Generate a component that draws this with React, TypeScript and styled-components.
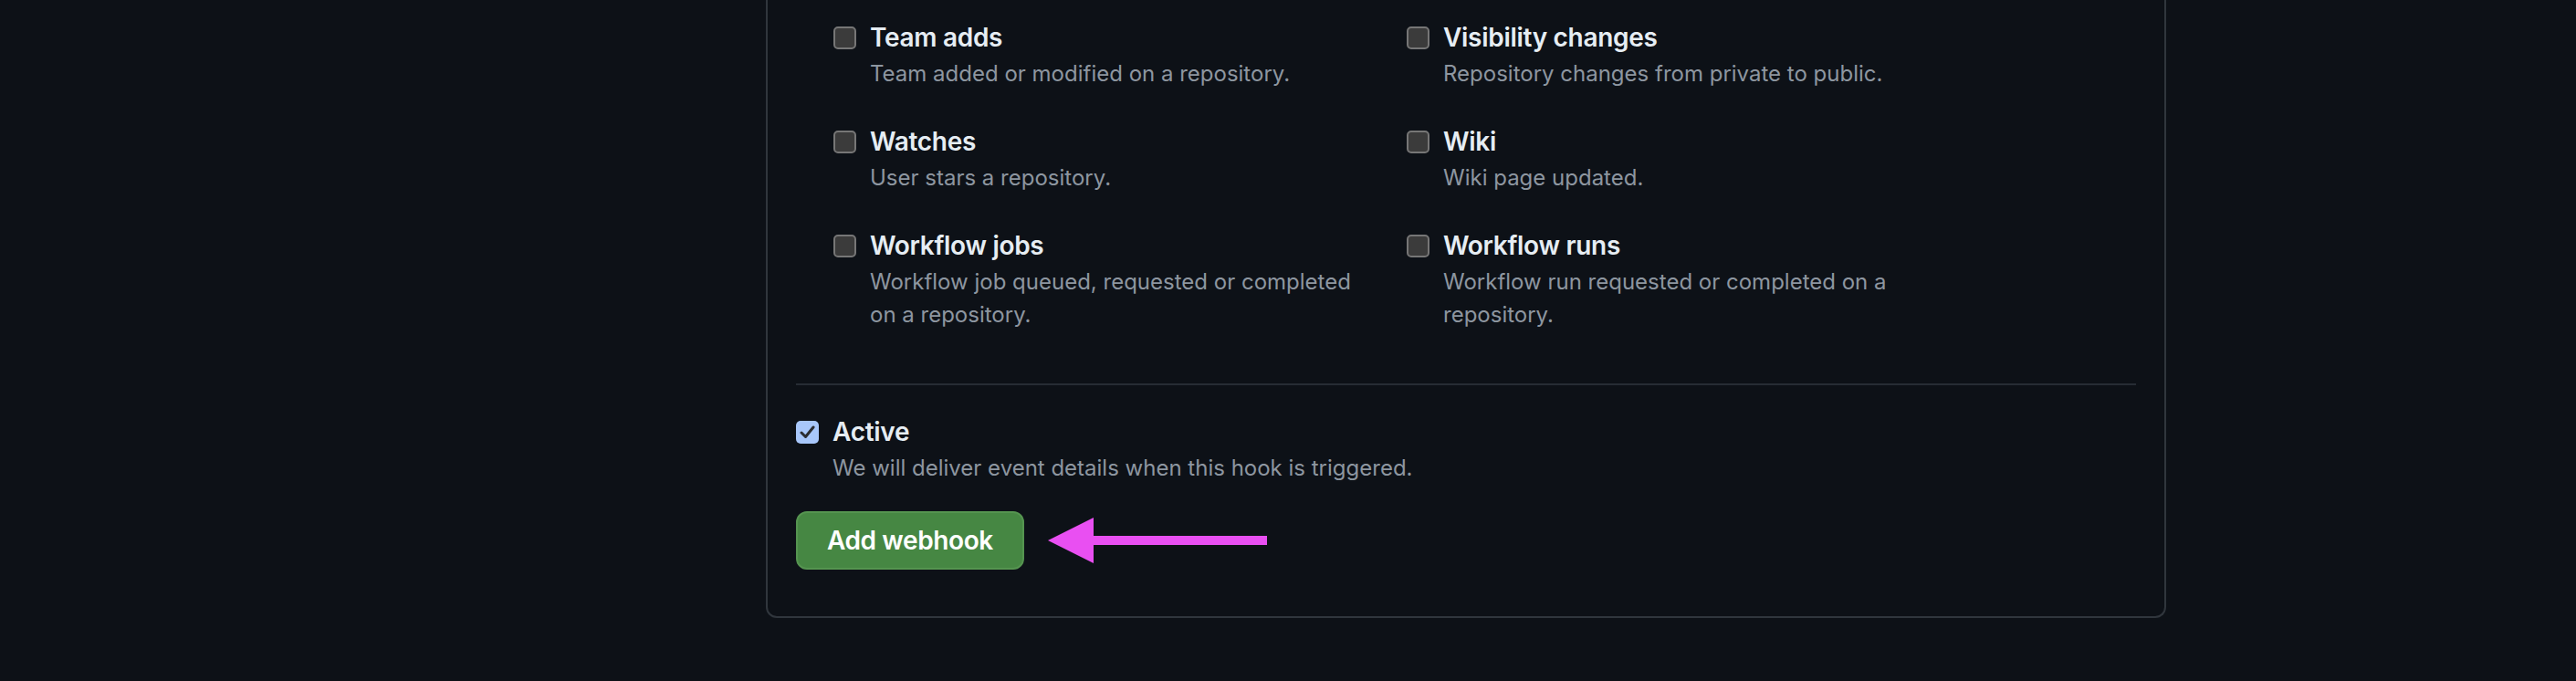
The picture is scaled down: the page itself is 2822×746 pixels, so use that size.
import React from 'react';
import styled, { createGlobalStyle } from 'styled-components';

const GlobalStyle = createGlobalStyle`
  html, body {
    margin: 0;
    padding: 0;
    background: #0d1117;
  }
  body {
    font-family: Inter, "Liberation Sans", Arial, sans-serif;
    -webkit-font-smoothing: antialiased;
  }
`;

const Page = styled.div`
  min-height: 746px;
  padding-left: 839px;
  background: #0d1117;
  box-sizing: border-box;
`;

const Card = styled.div`
  width: 1534px;
  box-sizing: border-box;
  border: 2px solid #30363d;
  border-top: none;
  border-radius: 0 0 12px 12px;
  padding: 21px 31px 51px 31px;
`;

const EventGrid = styled.div`
  display: grid;
  grid-template-columns: 628px 628px;
  row-gap: 36px;
  padding-left: 41px;
`;

const Option = styled.div`
  display: flex;
  align-items: flex-start;
  gap: 15px;
`;

const Box = styled.span<{ $checked?: boolean }>`
  flex: none;
  width: 25px;
  height: 25px;
  margin-top: 8px;
  box-sizing: border-box;
  border-radius: 5px;
  display: flex;
  align-items: center;
  justify-content: center;
  background: ${({ $checked }) => ($checked ? '#a8c7fa' : '#3b3b3b')};
  border: ${({ $checked }) => ($checked ? 'none' : '2px solid #767676')};
`;

const OptionBody = styled.div`
  display: flex;
  flex-direction: column;
`;

const Title = styled.span`
  font-size: 28px;
  font-weight: 600;
  line-height: 40px;
  letter-spacing: -0.3px;
  color: #e6edf3;
`;

const Note = styled.span<{ $width?: number }>`
  margin-top: 2px;
  font-size: 24px;
  line-height: 36px;
  color: #8d96a0;
  max-width: ${({ $width }) => ($width ? `${$width}px` : 'none')};
`;

const Divider = styled.hr`
  margin: 57px 0 31px 0;
  border: none;
  height: 2px;
  background: #262c34;
`;

const Actions = styled.div`
  margin-top: 29px;
  display: flex;
  align-items: center;
  gap: 26px;
`;

const PrimaryButton = styled.button`
  height: 64px;
  padding: 0 32px;
  box-sizing: border-box;
  border: 2px solid #559450;
  border-radius: 12px;
  background: #468743;
  color: #ffffff;
  font-family: inherit;
  font-size: 28px;
  font-weight: 600;
  letter-spacing: -0.4px;
  cursor: pointer;
`;

const Checkbox: React.FC<{ checked?: boolean }> = ({ checked }) => (
  <Box $checked={checked}>
    {checked && (
      <svg width="17" height="15" viewBox="0 0 17 15">
        <path d="M2 8 L6.5 12.5 L15 2" fill="none" stroke="#2b2d31" strokeWidth="3" strokeLinecap="round" strokeLinejoin="round" />
      </svg>
    )}
  </Box>
);

const Arrow = () => (
  <svg width="240" height="50" viewBox="0 0 240 50">
    <polygon points="0,25 50,0 50,50" fill="#e94ff2" />
    <rect x="49" y="20" width="191" height="10" fill="#e94ff2" />
  </svg>
);

const events = [
  { title: 'Team adds', note: 'Team added or modified on a repository.' },
  { title: 'Visibility changes', note: 'Repository changes from private to public.' },
  { title: 'Watches', note: 'User stars a repository.' },
  { title: 'Wiki', note: 'Wiki page updated.' },
  { title: 'Workflow jobs', note: 'Workflow job queued, requested or completed on a repository.' },
  { title: 'Workflow runs', note: 'Workflow run requested or completed on a repository.' },
];

export default function App() {
  return (
    <Page>
      <GlobalStyle />
      <Card>
        <EventGrid>
          {events.map((e) => (
            <Option key={e.title}>
              <Checkbox />
              <OptionBody>
                <Title>{e.title}</Title>
                <Note $width={540}>{e.note}</Note>
              </OptionBody>
            </Option>
          ))}
        </EventGrid>
        <Divider />
        <Option>
          <Checkbox checked />
          <OptionBody>
            <Title>Active</Title>
            <Note>We will deliver event details when this hook is triggered.</Note>
          </OptionBody>
        </Option>
        <Actions>
          <PrimaryButton>Add webhook</PrimaryButton>
          <Arrow />
        </Actions>
      </Card>
    </Page>
  );
}
